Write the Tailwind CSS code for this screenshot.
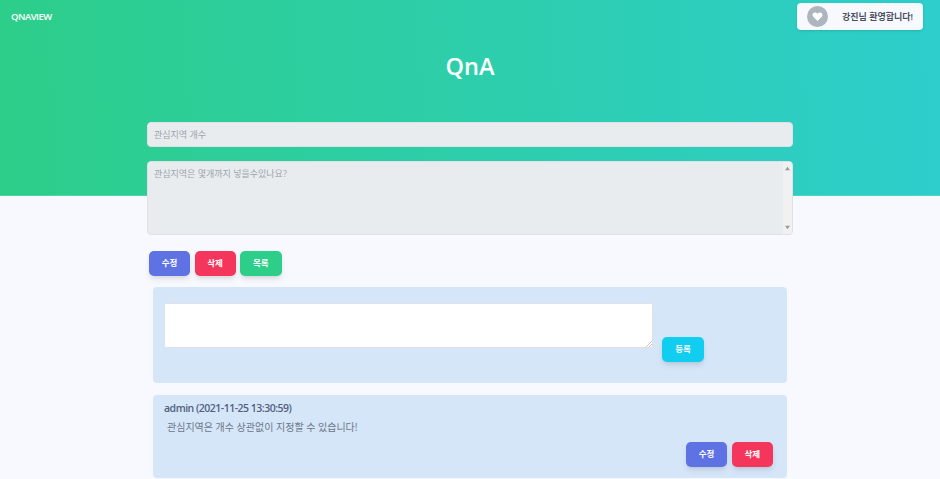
<!DOCTYPE html>
<html lang="ko">
<head>
    <meta charset="UTF-8">
    <meta name="viewport" content="width=device-width, initial-scale=1.0">
    <title>QnA</title>
    <script src="https://cdn.jsdelivr.net/npm/@tailwindcss/browser@4"></script>
</head>
<body class="h-[479px] overflow-hidden bg-[#f8f9fe] font-['Open_Sans','Noto_Sans_CJK_KR',sans-serif] text-[#525f7f]">

    <!-- header -->
    <header class="h-[196px] border-b border-[#7fe0cf]/40 bg-[linear-gradient(87deg,#2dce89,#2dcecc)]">
        <nav class="flex items-start justify-between pt-[3px] pr-[17px] pl-[11px]">
            <a class="mt-[6px] text-[9.500px] leading-[15px] font-semibold tracking-[-0.5px] text-white">QNAVIEW</a>
            <div class="flex h-[27px] w-[126px] items-center rounded bg-[#f8f9fe] pl-[10px] shadow-sm">
                <span class="flex size-[21px] items-center justify-center rounded-full bg-[#adb5bd]">
                    <svg class="size-[11px]" viewBox="0 0 24 24" fill="#fff"><path d="M12 22 2.6 12.3C-.2 9.4 1.4 3.5 6.6 3.5c2.5 0 4.2 1.3 5.4 3 1.2-1.700 2.900-3 5.400-3 5.200 0 6.800 5.900 4 8.800z"/></svg>
                </span>
                <span class="ml-[14px] text-[9px] font-semibold whitespace-nowrap text-[#484f5f]">강진님 환영합니다!</span>
            </div>
        </nav>
        <h1 class="mt-[19px] text-center text-[23.500px] leading-[34px] font-semibold text-white">QnA</h1>
    </header>

    <main class="mx-auto -mt-[74px] w-[646px]">
        <input type="text" placeholder="관심지역 개수" class="block h-[25px] w-full rounded border border-[#dee2e6] bg-[#e9ecef] px-[6px] text-[9px] placeholder:text-[#9aa3ad]">
        <div class="relative mt-[14px]">
            <textarea placeholder="관심지역은 몇개까지 넣을수있나요?" class="block h-[74px] w-full resize-none rounded border border-[#dee2e6] bg-[#e9ecef] px-[6px] py-[5px] text-[9px] placeholder:text-[#9aa3ad]"></textarea>
            <!-- scrollbar -->
            <div class="absolute top-px right-px bottom-px flex w-[9px] flex-col items-center justify-between rounded-r bg-[#f1f1f1] py-[4px]">
                <svg class="size-[5px]" viewBox="0 0 6 6" fill="#9a9a9a"><path d="M3 1 6 5H0z"/></svg>
                <svg class="size-[5px]" viewBox="0 0 6 6" fill="#9a9a9a"><path d="M0 1h6L3 5z"/></svg>
            </div>
        </div>

        <div class="mt-[16px] flex gap-[4.500px] pl-[2px]">
            <button class="h-[25px] w-[41px] rounded-[5px] bg-[#5e72e4] text-[8.500px] font-semibold text-white shadow-md">수정</button>
            <button class="h-[25px] w-[41px] rounded-[5px] bg-[#f5365c] text-[8.500px] font-semibold text-white shadow-md">삭제</button>
            <button class="h-[25px] w-[41.500px] rounded-[5px] bg-[#2dce89] text-[8.500px] font-semibold text-white shadow-md">목록</button>
        </div>

        <section class="mx-[6px] mt-[11px] flex h-[96px] items-start rounded bg-[#d6e6f9] pt-[16px] pl-[11px]">
            <div class="relative">
                <textarea class="block h-[45px] w-[489px] resize-none rounded-[2px] border border-[#dee2e6] bg-white"></textarea>
                <svg class="absolute right-px bottom-px size-[6px]" viewBox="0 0 6 6" stroke="#b5b5b5" stroke-width=".8"><path d="M0 6 6 0M3 6l3-3"/></svg>
            </div>
            <button class="mt-[34px] ml-[9px] h-[25px] w-[42px] rounded-[5px] bg-[#11cdef] text-[8.500px] font-semibold text-white shadow-md">등록</button>
        </section>

        <section class="mx-[6px] mt-[12px] h-[83px] rounded bg-[#d6e6f9] px-[11px] pt-[5px]">
            <p class="text-[10.500px] leading-[16px] font-semibold tracking-[-0.5px] text-[#525f7f]">admin (2021-11-25 13:30:59)</p>
            <p class="mt-[3px] pl-[3px] text-[10px] leading-[16px] text-[#6b7689]">관심지역은 개수 상관없이 지정할 수 있습니다!</p>
            <div class="mt-[7px] flex justify-end gap-[4.500px] pr-[3px]">
                <button class="h-[25px] w-[41px] rounded-[5px] bg-[#5e72e4] text-[8.500px] font-semibold text-white shadow-md">수정</button>
                <button class="h-[25px] w-[41.500px] rounded-[5px] bg-[#f5365c] text-[8.500px] font-semibold text-white shadow-md">삭제</button>
            </div>
        </section>
    </main>

</body>
</html>
